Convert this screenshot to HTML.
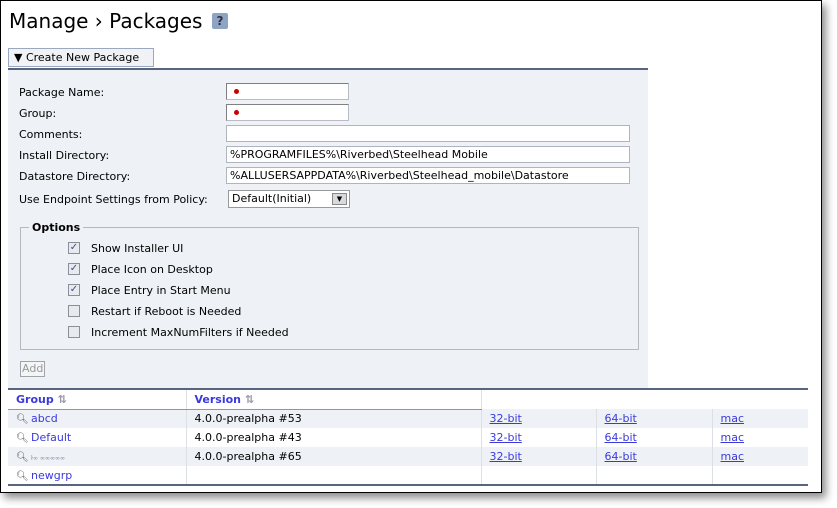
<!DOCTYPE html>
<html><head><style>
*{margin:0;padding:0;box-sizing:border-box}
body{width:837px;height:508px;background:#fff;font-family:"DejaVu Sans","Liberation Sans",sans-serif;font-size:11px;color:#000;position:relative;overflow:hidden}
.win{position:absolute;left:0;top:0;width:822px;height:493px;border:1px solid #000;background:#fff;box-shadow:4px 5px 8px rgba(0,0,0,.45)}
.a{position:absolute;white-space:nowrap}
h1{position:absolute;left:8px;top:8px;font-weight:normal;font-size:20px;font-family:"DejaVu Sans",sans-serif}
.q{position:absolute;left:211px;top:12px;width:16px;height:16px;background:#8fa3c4;border-radius:2px;color:#334;font-size:12px;text-align:center;line-height:16px;font-weight:bold}
.tab{position:absolute;left:7px;top:47px;width:146px;height:19px;border:1px solid #9aa8c0;background:#f0f2f6;padding-left:5px;line-height:17px}
.panel{position:absolute;left:7px;top:67px;width:640px;height:320px;background:#eef1f6;border-top:2px solid #57657f}
.inp{position:absolute;height:17px;background:#fff;border:1px solid #b8bcc4;border-top-color:#808080;border-left-color:#808080;padding-left:3px;line-height:15px}
.inp2{position:absolute;height:17px;background:#fff;border:1px solid #b0b4bc;padding-left:3px;line-height:15px}
.dot{position:absolute;left:7px;top:5px;width:5px;height:5px;border-radius:50%;background:#c00}
fieldset{position:absolute;left:19px;top:226px;width:619px;height:123px;border:1px solid #b4b8c0}
.cb{position:absolute;left:67px;width:12px;height:12px;border:1px solid #8a8f98;background:#e8eaee;color:#3c4f8c;font-size:10px;line-height:10px;text-align:center}
table{position:absolute;left:7px;top:387px;width:800px;border-collapse:collapse;border-top:2px solid #57657f;border-bottom:2px solid #57657f}
td{height:19px;padding-left:8px;vertical-align:middle}
td+td{border-left:1px solid #dcdfe4}
.s td{background:#eef1f6}
a{color:#3a3adc}
.lk{color:#3a3adc;text-decoration:underline}
th{text-align:left;color:#3a3adc;font-weight:bold;padding-left:8px;height:20px}
.mg{display:inline-block;width:10px;color:#555;font-size:10px;margin-right:5px}
</style></head><body>
<div class="win">
<h1>Manage › Packages</h1><div class="q">?</div>
<div class="tab">▼ Create New Package</div>
<div class="panel"></div>
<div class="a" style="left:18px;top:85px">Package Name:</div>
<div class="a" style="left:18px;top:106px">Group:</div>
<div class="a" style="left:18px;top:127px">Comments:</div>
<div class="a" style="left:18px;top:148px">Install Directory:</div>
<div class="a" style="left:18px;top:169px">Datastore Directory:</div>
<div class="a" style="left:18px;top:192px">Use Endpoint Settings from Policy:</div>
<div class="inp" style="left:225px;top:82px;width:123px"><div class="dot"></div></div>
<div class="inp" style="left:225px;top:103px;width:123px"><div class="dot"></div></div>
<div class="inp2" style="left:225px;top:124px;width:404px"></div>
<div class="inp2" style="left:225px;top:145px;width:404px">%PROGRAMFILES%\Riverbed\Steelhead Mobile</div>
<div class="inp2" style="left:225px;top:166px;width:404px">%ALLUSERSAPPDATA%\Riverbed\Steelhead_mobile\Datastore</div>
<div class="inp2" style="left:227px;top:189px;width:122px;height:18px;border-color:#999">Default(Initial)<div style="position:absolute;right:2px;top:2px;width:15px;height:12px;background:#d8dade;border:1px solid #888;font-size:7px;text-align:center;line-height:11px">▼</div></div>
<fieldset></fieldset>
<div class="a" style="left:28px;top:220px;background:#eef1f6;padding:0 3px;font-weight:bold">Options</div>
<div class="cb" style="top:241px">✓</div><div class="a" style="left:90px;top:241px">Show Installer UI</div>
<div class="cb" style="top:262px">✓</div><div class="a" style="left:90px;top:262px">Place Icon on Desktop</div>
<div class="cb" style="top:283px">✓</div><div class="a" style="left:90px;top:283px">Place Entry in Start Menu</div>
<div class="cb" style="top:304px"></div><div class="a" style="left:90px;top:304px">Restart if Reboot is Needed</div>
<div class="cb" style="top:325px"></div><div class="a" style="left:90px;top:325px">Increment MaxNumFilters if Needed</div>
<div class="a" style="left:19px;top:360px;border:1px solid #a0a4aa;color:#999;padding:0 1px;height:16px;line-height:14px;background:#f4f5f7">Add</div>
<table>
<tr><th style="width:178px;border-bottom:1px solid #8a96b0">Group <span style="color:#99a">⇅</span></th><th style="width:295px;border-bottom:1px solid #8a96b0;border-left:1px solid #dcdfe4">Version <span style="color:#99a">⇅</span></th><th style="border-left:1px solid #dcdfe4;width:115px"></th><th style="width:116px"></th><th></th></tr>
<tr class="s"><td><span class="mg">🔍︎</span><a>abcd</a></td><td>4.0.0-prealpha #53</td><td class="lk">32-bit</td><td class="lk">64-bit</td><td class="lk">mac</td></tr>
<tr><td><span class="mg">🔍︎</span><a>Default</a></td><td>4.0.0-prealpha #43</td><td class="lk">32-bit</td><td class="lk">64-bit</td><td class="lk">mac</td></tr>
<tr class="s"><td><span class="mg">🔍︎</span><a style="font-size:6px;color:#88a">ŀ∞ ∞∞∞∞∞</a></td><td>4.0.0-prealpha #65</td><td class="lk">32-bit</td><td class="lk">64-bit</td><td class="lk">mac</td></tr>
<tr><td><span class="mg">🔍︎</span><a>newgrp</a></td><td></td><td></td><td></td><td></td></tr>
</table>
</div>
</body></html>
